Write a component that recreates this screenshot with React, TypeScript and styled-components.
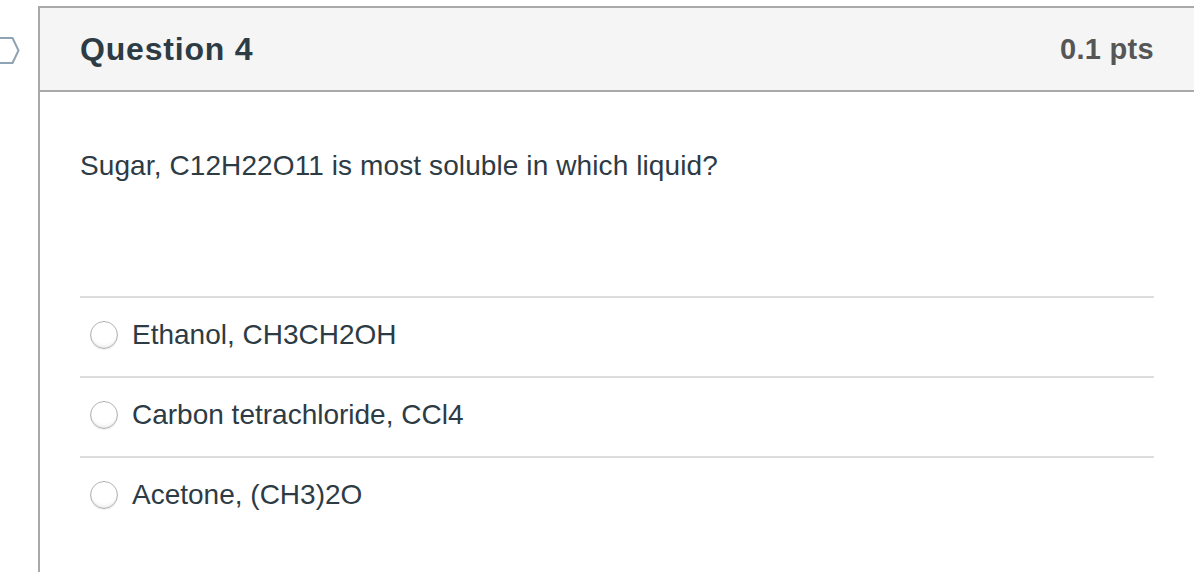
import React from "react";
import styled, { createGlobalStyle } from "styled-components";

const Global = createGlobalStyle`
  html, body { margin: 0; padding: 0; background: #fff; overflow: hidden; }
  body { font-family: "Liberation Sans", Arial, Helvetica, sans-serif; }
`;

const Page = styled.div`
  display: flex;
  padding-top: 6px;
  width: 1200px;
  height: 572px;
  box-sizing: border-box;
`;

const Gutter = styled.div`
  width: 38px;
  flex: none;
  overflow: hidden;
`;

const Flag = styled.svg`
  display: block;
  margin-top: 31px;
`;

const Card = styled.div`
  flex: 1;
  border-top: 2px solid #a9a9a9;
  border-left: 2px solid #a9a9a9;
  display: flex;
  flex-direction: column;
`;

const Header = styled.div`
  height: 82px;
  background: #f5f5f5;
  border-bottom: 2px solid #a9a9a9;
  display: flex;
  align-items: center;
  justify-content: space-between;
  padding: 0 46px 0 40px;
`;

const Title = styled.h2`
  margin: 0;
  font-size: 32px;
  letter-spacing: 0.8px;
  font-weight: 700;
  color: #2d3b45;
`;

const Points = styled.div`
  font-size: 29px;
  font-weight: 700;
  letter-spacing: 0.3px;
  color: #565656;
`;

const Body = styled.div`
  padding: 0 46px 0 40px;
`;

const QuestionText = styled.p`
  margin: 0;
  padding: 54px 0 110px;
  font-size: 28px;
  letter-spacing: 0.1px;
  line-height: 40px;
  color: #2d3b45;
`;

const Answers = styled.div`
  display: flex;
  flex-direction: column;
`;

const AnswerRow = styled.label`
  display: flex;
  align-items: center;
  gap: 14px;
  height: 80px;
  padding: 0 0 5px 10px;
  box-sizing: border-box;
  border-top: 2px solid #dddddd;
  font-size: 28px;
  color: #2d3b45;
`;

const Radio = styled.span`
  width: 26px;
  height: 26px;
  border-radius: 50%;
  border: 1px solid #b3b3b3;
  background: radial-gradient(circle at 50% 35%, #ffffff 55%, #ececec 100%);
  box-shadow: inset 0 -1px 2px rgba(0, 0, 0, 0.08), 0 1px 1px rgba(0, 0, 0, 0.06);
  flex: none;
`;

const answers = [
  "Ethanol, CH3CH2OH",
  "Carbon tetrachloride, CCl4",
  "Acetone, (CH3)2O",
];

export default function App() {
  return (
    <>
      <Global />
      <Page>
        <Gutter>
          <Flag width="24" height="30" viewBox="0 0 24 30">
            <path
              d="M-10 1 H12.5 L18.5 13.5 L12.5 26 H-10"
              fill="none"
              stroke="#8ea3b4"
              strokeWidth="2"
              strokeLinejoin="round"
            />
          </Flag>
        </Gutter>
        <Card>
          <Header>
            <Title>Question 4</Title>
            <Points>0.1 pts</Points>
          </Header>
          <Body>
            <QuestionText>Sugar, C12H22O11 is most soluble in which liquid?</QuestionText>
            <Answers>
              {answers.map((a) => (
                <AnswerRow key={a}>
                  <Radio />
                  {a}
                </AnswerRow>
              ))}
            </Answers>
          </Body>
        </Card>
      </Page>
    </>
  );
}
